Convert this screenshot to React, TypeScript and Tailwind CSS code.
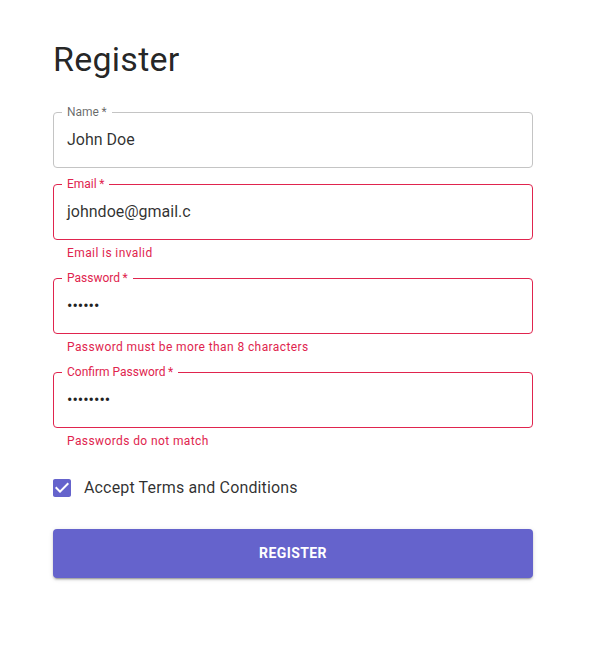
import React from "react";

const RED = "text-[#e0244e]";

function Field({
  label,
  value,
  error,
  helper,
  dots,
}: {
  label: string;
  value: string;
  error?: boolean;
  helper?: string;
  dots?: boolean;
}) {
  return (
    <div className="flex flex-col">
      <div
        className={`relative h-[56px] rounded-[4px] border ${
          error ? "border-[#e0244e]" : "border-[#c4c4c4]"
        } flex items-center pl-[13px]`}
      >
        <span
          className={`absolute left-[8px] top-[-1px] -translate-y-1/2 bg-white px-[5px] text-[12px] leading-[14px] ${
            error ? RED : "text-[rgba(0,0,0,0.6)]"
          }`}
        >
          {label}
          {"\u2009*"}
        </span>
        <span
          className={`text-[16px] leading-[24px] ${
            dots ? "text-[#222] tracking-[0px]" : "text-[rgba(0,0,0,0.82)]"
          }`}
        >
          {value}
        </span>
      </div>
      {helper && (
        <div className={`mt-[3px] pl-[14px] text-[12px] leading-[20px] tracking-[0.4px] ${RED}`}>
          {helper}
        </div>
      )}
    </div>
  );
}

export default function App() {
  return (
    <div
      className="min-h-[656px] w-full bg-white"
      style={{ fontFamily: "Roboto, 'Liberation Sans', sans-serif" }}
    >
      <div className="ml-[53px] w-[480px] pt-[38px]">
        <h1 className="text-[34px] leading-[42px] font-normal tracking-[0.25px] text-[rgba(0,0,0,0.87)]">
          Register
        </h1>
        <div className="mt-[32px] flex flex-col">
          <Field label="Name" value="John Doe" />
          <div className="mt-[16px]">
            <Field label="Email" value="johndoe@gmail.c" error helper="Email is invalid" />
          </div>
          <div className="mt-[15px]">
            <Field
              label="Password"
              value={"\u2022\u2022\u2022\u2022\u2022\u2022"}
              dots
              error
              helper="Password must be more than 8 characters"
            />
          </div>
          <div className="mt-[15px]">
            <Field
              label="Confirm Password"
              value={"\u2022\u2022\u2022\u2022\u2022\u2022\u2022\u2022"}
              dots
              error
              helper="Passwords do not match"
            />
          </div>
        </div>
        <div className="mt-[25px] flex items-center">
          <svg viewBox="0 0 24 24" className="-ml-[3px] h-6 w-6">
            <path
              fill="#6563cc"
              d="M19 3H5c-1.11 0-2 .9-2 2v14c0 1.1.89 2 2 2h14c1.11 0 2-.9 2-2V5c0-1.1-.89-2-2-2zm-9 14l-5-5 1.41-1.41L10 14.17l7.59-7.59L19 8l-9 9z"
            />
          </svg>
          <span className="ml-[10px] text-[16px] leading-[24px] text-[rgba(0,0,0,0.82)] tracking-[0.15px]">
            Accept Terms and Conditions
          </span>
        </div>
        <button className="mt-[29px] flex h-[49px] w-full items-center justify-center rounded-[4px] bg-[#6563cc] text-[14px] font-bold tracking-[0.4px] text-white shadow-[0_3px_1px_-2px_rgba(0,0,0,0.2),0_2px_2px_0_rgba(0,0,0,0.14),0_1px_5px_0_rgba(0,0,0,0.12)]">
          REGISTER
        </button>
      </div>
    </div>
  );
}
